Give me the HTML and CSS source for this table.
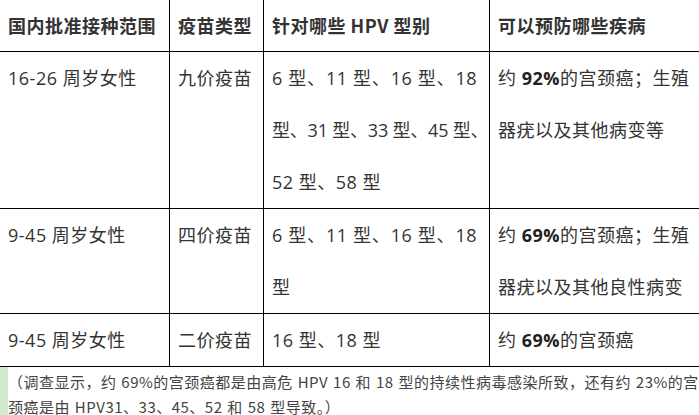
FILE: index.html
```html
<!DOCTYPE html>
<html lang="zh">
<head>
<meta charset="utf-8">
<link rel="stylesheet" href="styles.css">
</head>
<body>
<table class="hpv">
  <colgroup>
    <col class="c1"><col class="c2"><col class="c3"><col class="c4">
  </colgroup>
  <thead>
    <tr>
      <th>国内批准接种范围</th>
      <th>疫苗类型</th>
      <th>针对哪些 HPV 型别</th>
      <th>可以预防哪些疾病</th>
    </tr>
  </thead>
  <tbody>
    <tr>
      <td>16-26 周岁女性</td>
      <td>九价疫苗</td>
      <td class="types"><span class="ln full">6 型、11 型、16 型、18</span><span class="ln tight">型、31 型、33 型、45 型、</span><span class="ln">52 型、58 型</span></td>
      <td>约 <b>92%</b>的宫颈癌；生殖器疣以及其他病变等</td>
    </tr>
    <tr>
      <td>9-45 周岁女性</td>
      <td>四价疫苗</td>
      <td class="types"><span class="ln full">6 型、11 型、16 型、18</span><span class="ln">型</span></td>
      <td>约 <b>69%</b>的宫颈癌；生殖器疣以及其他良性病变</td>
    </tr>
    <tr>
      <td>9-45 周岁女性</td>
      <td>二价疫苗</td>
      <td class="types"><span class="ln">16 型、18 型</span></td>
      <td>约 <b>69%</b>的宫颈癌</td>
    </tr>
  </tbody>
</table>
<p class="note">（调查显示，约 69%的宫颈癌都是由高危 HPV 16 和 18 型的持续性病毒感染所致，还有约 23%的宫颈癌是由 HPV31、33、45、52 和 58 型导致。）</p>
</body>
</html>
```
FILE: styles.css
```css
html, body {
  margin: 0;
  padding: 0;
  overflow: hidden;
  background: #fff;
}
body {
  width: 699px;
  font-family: "Open Sans", "Noto Sans CJK SC", sans-serif;
  color: #333;
}
.hpv {
  border-collapse: collapse;
  table-layout: fixed;
  width: 711px;
  margin: -1px 0 0 -1px;
  font-size: 18px;
  letter-spacing: 0.5px;
}
.c1 { width: 170px; }
.c2 { width: 94px; }
.c3 { width: 226px; }
.c4 { width: 221px; }
.hpv th,
.hpv td {
  border: 1px solid #000;
  padding: 0 8px;
  line-height: 51px;
  text-align: left;
  vertical-align: top;
}
.hpv th {
  font-family: "Noto Sans CJK SC", sans-serif;
  font-weight: bold;
  color: #333;
}
.hpv td {
  line-height: 52px;
}
.hpv td.types {
  padding-right: 12px;
}
.ln {
  display: block;
  white-space: nowrap;
}
.ln.full {
  text-align: justify;
  text-align-last: justify;
}
.ln.tight {
  letter-spacing: -0.2px;
}
.hpv b {
  color: #222;
}
.note {
  margin: 0;
  padding: 2px 0 0 0;
  border-left: 8px solid #d3e9cf;
  font-family: "Noto Sans CJK SC", sans-serif;
  font-size: 15px;
  line-height: 25px;
  letter-spacing: 0.5px;
  word-spacing: 1px;
  color: #444;
  height: 60px;
}
```
